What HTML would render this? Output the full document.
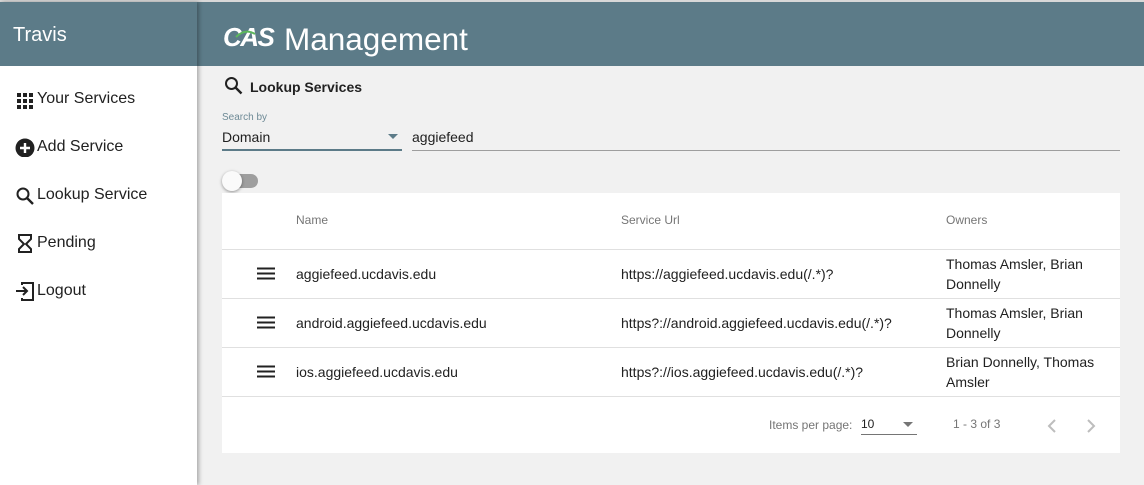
<!DOCTYPE html>
<html><head><meta charset="utf-8"><style>
*{box-sizing:border-box;margin:0;padding:0}
body{width:1144px;height:485px;overflow:hidden;font-family:"Liberation Sans",sans-serif;background:#f1f1f1;position:relative;color:#212121}
.topline{position:absolute;left:0;top:0;width:1144px;height:2px;background:#d8d8d8}
.side{position:absolute;left:0;top:2px;width:197px;height:483px;background:#fff;box-shadow:2px 0 4px rgba(0,0,0,.3);z-index:2}
.sidehead{height:64px;background:#5c7b88;color:#fff;font-size:20px;padding:22px 0 0 13px}
.nav{position:absolute;left:15px;font-size:16px;color:#212121;display:flex;align-items:center}
.nav svg{margin-right:2px}
.head{position:absolute;left:197px;top:2px;width:947px;height:64px;background:#5c7b88;color:#fff}
.cas{position:absolute;left:26px;top:20px;font-size:26px;font-weight:bold;font-style:italic;letter-spacing:-1.5px}
.mgmt{position:absolute;left:87px;top:19px;font-size:31.5px}
.abs{position:absolute}
.card{position:absolute;left:222px;top:193px;width:898px;height:260px;background:#fff}
.row{position:absolute;left:0;width:898px;border-top:1px solid #e0e0e0;font-size:14px}
.g{color:#757575;font-size:12px}
</style></head><body>
<div class="topline"></div>
<div class="side">
 <div class="sidehead">Travis</div>
 <div class="nav" style="top:87px"><svg width="20" height="20" viewBox="0 0 20 20"><g fill="#212121"><rect x="2" y="4" width="4" height="4"/><rect x="8" y="4" width="4" height="4"/><rect x="14" y="4" width="4" height="4"/><rect x="2" y="10" width="4" height="4"/><rect x="8" y="10" width="4" height="4"/><rect x="14" y="10" width="4" height="4"/><rect x="2" y="16" width="4" height="4"/><rect x="8" y="16" width="4" height="4"/><rect x="14" y="16" width="4" height="4"/></g></svg>Your Services</div>
 <div class="nav" style="top:135px"><svg width="20" height="20" viewBox="0 0 20 20"><circle cx="10" cy="11" r="9.5" fill="#212121"/><path d="M10 6v10M5 11h10" stroke="#fff" stroke-width="2.4"/></svg>Add Service</div>
 <div class="nav" style="top:183px"><svg width="20" height="20" viewBox="0 0 20 20"><circle cx="8" cy="9" r="5.5" fill="none" stroke="#212121" stroke-width="2"/><path d="M12 13l6 6" stroke="#212121" stroke-width="2.4"/></svg>Lookup Service</div>
 <div class="nav" style="top:231px"><svg width="20" height="20" viewBox="0 0 20 20"><path d="M4 2h12v4l-5 5 5 5v3H4v-3l5-5-5-5z" fill="none" stroke="#212121" stroke-width="2"/></svg>Pending</div>
 <div class="nav" style="top:279px"><svg width="20" height="20" viewBox="0 0 20 20"><path d="M7 4V2h11v17H7v-2M1 10h11M8 6l4 4-4 4" fill="none" stroke="#212121" stroke-width="2"/></svg>Logout</div>
</div>
<div class="head">
 <div class="cas">CAS<svg class="abs" style="left:12px;top:6px" width="22" height="10"><path d="M1 9Q10 0 20 6" stroke="#5cb85c" stroke-width="2" fill="none"/></svg></div>
 <div class="mgmt">Management</div>
</div>
<svg class="abs" style="left:224px;top:76px" width="20" height="20" viewBox="0 0 20 20"><circle cx="7.5" cy="7.5" r="5.5" fill="none" stroke="#212121" stroke-width="2"/><path d="M11.5 11.5l6 6" stroke="#212121" stroke-width="2.4"/></svg>
<div class="abs" style="left:250px;top:79px;font-size:14px;font-weight:bold">Lookup Services</div>
<div class="abs" style="left:222px;top:112px;font-size:10px;color:#6e8a96">Search by</div>
<div class="abs" style="left:222px;top:129px;font-size:14px">Domain</div>
<svg class="abs" style="left:388px;top:134px" width="10" height="6"><path d="M0 0h10L5 5z" fill="#5c7b88"/></svg>
<div class="abs" style="left:222px;top:149px;width:180px;height:2px;background:#5c7b88"></div>
<div class="abs" style="left:412px;top:129px;font-size:14px">aggiefeed</div>
<div class="abs" style="left:412px;top:150px;width:708px;height:1px;background:#9e9e9e"></div>
<div class="abs" style="left:225px;top:174px;width:33px;height:14px;border-radius:7px;background:#9e9e9e"></div>
<div class="abs" style="left:222px;top:171px;width:20px;height:20px;border-radius:50%;background:#fafafa;box-shadow:0 1px 3px rgba(0,0,0,.4)"></div>
<div class="card">
 <div class="abs g" style="left:74px;top:20px">Name</div>
 <div class="abs g" style="left:399px;top:20px">Service Url</div>
 <div class="abs g" style="left:724px;top:20px">Owners</div>
 <div class="row" style="top:56px;height:49px"><svg class="abs" style="left:35px;top:17px" width="18" height="13"><path d="M0 1.5h18M0 6.5h18M0 11.5h18" stroke="#212121" stroke-width="2"/></svg><span class="abs" style="left:74px;top:16px">aggiefeed.ucdavis.edu</span><span class="abs" style="left:399px;top:16px">https://aggiefeed.ucdavis.edu(/.*)?</span><span class="abs" style="left:724px;top:4px;line-height:20px">Thomas Amsler, Brian<br>Donnelly</span></div>
 <div class="row" style="top:105px;height:49px"><svg class="abs" style="left:35px;top:17px" width="18" height="13"><path d="M0 1.5h18M0 6.5h18M0 11.5h18" stroke="#212121" stroke-width="2"/></svg><span class="abs" style="left:74px;top:16px">android.aggiefeed.ucdavis.edu</span><span class="abs" style="left:399px;top:16px">https?://android.aggiefeed.ucdavis.edu(/.*)?</span><span class="abs" style="left:724px;top:4px;line-height:20px">Thomas Amsler, Brian<br>Donnelly</span></div>
 <div class="row" style="top:154px;height:49px"><svg class="abs" style="left:35px;top:17px" width="18" height="13"><path d="M0 1.5h18M0 6.5h18M0 11.5h18" stroke="#212121" stroke-width="2"/></svg><span class="abs" style="left:74px;top:16px">ios.aggiefeed.ucdavis.edu</span><span class="abs" style="left:399px;top:16px">https?://ios.aggiefeed.ucdavis.edu(/.*)?</span><span class="abs" style="left:724px;top:4px;line-height:20px">Brian Donnelly, Thomas<br>Amsler</span></div>
 <div class="row" style="top:203px;height:57px"></div>
 <div class="abs g" style="left:547px;top:225px">Items per page:</div>
 <div class="abs" style="left:639px;top:224px;font-size:12px">10</div>
 <svg class="abs" style="left:681px;top:229px" width="10" height="5"><path d="M0 0h10L5 5z" fill="#757575"/></svg>
 <div class="abs" style="left:639px;top:241px;width:56px;height:1px;background:#757575"></div>
 <div class="abs g" style="left:731px;top:224px">1 - 3 of 3</div>
 <svg class="abs" style="left:825px;top:226px" width="10" height="14"><path d="M8 1L2 7l6 6" stroke="#bdbdbd" stroke-width="2" fill="none"/></svg>
 <svg class="abs" style="left:864px;top:226px" width="10" height="14"><path d="M2 1l6 6-6 6" stroke="#bdbdbd" stroke-width="2" fill="none"/></svg>
</div>
</body></html>
